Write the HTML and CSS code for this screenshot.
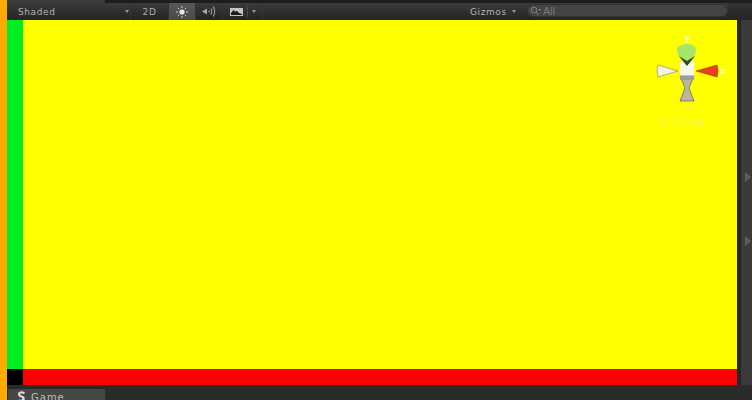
FILE: index.html
```html
<!DOCTYPE html>
<html lang="en">
<head>
  <meta charset="UTF-8" />
  <title>Scene</title>
  <link rel="stylesheet" href="styles.css">
</head>
<body>
  <!-- Left edge of the window -->
  <div class="edge"></div>

  <div class="editor">
    <div class="tab-top"><div class="tab-top-left"></div></div>

    <!-- Scene toolbar -->
    <div class="toolbar">
      <div class="tool tool-shaded"><span>Shaded</span><i class="caret"></i></div>
      <div class="tool tool-2d">2D</div>
      <div class="tool tool-light">
        <svg width="18" height="14" viewBox="0 0 18 14">
          <circle cx="9" cy="7" r="2.6" fill="#e8e8e8"/>
          <path d="M9 1V3M9 11V13M3 7H5M13 7H15M4.8 2.8L6.2 4.2M11.8 9.8L13.2 11.2M13.2 2.8L11.8 4.2M6.2 9.8L4.8 11.2" stroke="#cfcfcf" stroke-width="1"/>
        </svg>
      </div>
      <div class="tool tool-audio">
        <svg width="16" height="13" viewBox="0 0 16 13">
          <path d="M1 6.5L6 3.5V9.5Z" fill="#a8a8a8"/>
          <circle cx="8" cy="6.5" r="0.8" fill="#a8a8a8"/>
          <path d="M10 3.5Q11.5 6.5 10 9.5M12.5 1.5Q15 6.5 12.5 11.5" fill="none" stroke="#a8a8a8" stroke-width="1"/>
        </svg>
      </div>
      <div class="tool tool-image">
        <svg width="13" height="8" viewBox="0 0 13 8">
          <rect width="13" height="8" fill="#c4c4c4"/>
          <path d="M1 7V5L3.5 2L5 3.5L7 3L9 5L12 6V7Z" fill="#1c1c1c"/>
        </svg>
        <i class="sep"></i><i class="caret"></i>
      </div>
      <div class="spacer"></div>
      <div class="tool tool-gizmos"><span>Gizmos</span><i class="caret"></i></div>
      <div class="search">
        <svg width="12" height="10" viewBox="0 0 12 10">
          <circle cx="4" cy="4" r="2.8" fill="none" stroke="#808080" stroke-width="1"/>
          <path d="M6 6L8.5 9" stroke="#808080" stroke-width="1"/>
          <path d="M8 3H11.5L9.7 5Z" fill="#808080"/>
        </svg>
        <span>All</span>
      </div>
      <div class="toolbar-end"></div>
    </div>

    <div class="middle">
      <!-- Viewport -->
      <div class="view">
        <div class="view-top">
          <div class="bar-green"></div>
          <div class="scene">
            <div class="gizmo">
              <svg width="72" height="72" viewBox="0 0 72 72">
                <path d="M30 1L32 5L34 1M32 5V8" fill="none" stroke="#fffbc8" stroke-width="1.6"/>
                <path d="M22 15Q22 9 32 9Q41 9 41 15Q41 22 32 29Q22 22 22 15Z" fill="#a6e46a"/>
                <rect x="25" y="27" width="14" height="14" fill="#f6f6ea"/>
                <path d="M24 21L32 26L40 21L32 31Z" fill="#2c4a1c"/>
                <path d="M3 30L23 36L3 42Q1 36 3 30Z" fill="#f3f3e4" stroke="#85825e" stroke-width="0.6"/>
                <path d="M62 30L41 36L62 42Q64 36 62 30Z" fill="#e8401c" stroke="#a53a10" stroke-width="0.6"/>
                <path d="M65 34L69 39M69 34L65 39" stroke="#fffbc8" stroke-width="1.4"/>
                <path d="M25 41H39L34 53L39 66H25L30 53Z" fill="#b9b7a4" stroke="#706e58" stroke-width="0.8"/>
                <rect x="25" y="41" width="14" height="4" fill="#9d9d98"/>
              </svg>
              <div class="persp"><span>&lt;</span> Persp</div>
            </div>
          </div>
        </div>
        <div class="view-bottom">
          <div class="corner"></div>
          <div class="bar-red"></div>
        </div>
      </div>
      <!-- Dark strip to the right -->
      <div class="side">
        <i class="arrow"></i>
        <i class="arrow"></i>
      </div>
    </div>

    <!-- Bottom tabs -->
    <div class="bottom">
      <div class="tab-game">
        <svg width="9" height="11" viewBox="0 0 9 11">
          <path d="M7.5 2Q2.5 0.5 2 3Q2 5 4.5 5.5Q7 6 6.5 8.5Q5 10.5 1.5 9.5" fill="none" stroke="#dcdcdc" stroke-width="2.2"/>
        </svg>
        <span>Game</span>
      </div>
    </div>
  </div>
</body>
</html>
```

FILE: styles.css
```css
* {
  margin: 0;
  padding: 0;
  box-sizing: border-box;
}

html, body {
  width: 752px;
  height: 400px;
  overflow: hidden;
}

body {
  display: flex;
  font-family: 'DejaVu Sans', sans-serif;
  color: #b4b4b4;
  background: #2e2e2e;
}

.edge {
  width: 7px;
  background: #ffaa00;
}

.editor {
  flex: 1;
  display: flex;
  flex-direction: column;
  min-width: 0;
}

.tab-top {
  height: 3px;
  background: #1d1d1d;
}

.tab-top-left {
  width: 98px;
  height: 3px;
  background: #3c3c3c;
}

.toolbar {
  height: 17px;
  display: flex;
  align-items: stretch;
  background: linear-gradient(#3a3a3a, #242424);
  font-size: 9px;
  letter-spacing: 0.6px;
}

.tool {
  display: flex;
  align-items: center;
  border-right: 1px solid #333;
}

.tool-shaded {
  width: 124px;
  padding: 0 1px 0 11px;
  justify-content: space-between;
}

.tool-2d {
  width: 38px;
  justify-content: center;
  color: #aaa;
}

.tool-light {
  width: 27px;
  justify-content: center;
  background: linear-gradient(#585858, #484848);
}

.tool-audio {
  width: 27px;
  justify-content: center;
}

.tool-image {
  width: 40px;
  padding-left: 7px;
  gap: 4px;
}

.sep {
  width: 1px;
  height: 11px;
  background: #4a4a4a;
}

.caret {
  width: 0;
  height: 0;
  border-left: 2px solid transparent;
  border-right: 2px solid transparent;
  border-top: 3px solid #999;
}

.spacer {
  flex: 1;
}

.tool-gizmos {
  width: 62px;
  padding-left: 5px;
  gap: 5px;
  border-right: 0;
}

.search {
  width: 201px;
  height: 13px;
  margin-top: 1px;
  padding-left: 2px;
  display: flex;
  align-items: center;
  gap: 1px;
  background: #444;
  border: 1px solid #333;
  border-radius: 7px;
  font-family: 'Liberation Sans', sans-serif;
  font-size: 11px;
  letter-spacing: 0;
  color: #777;
}

.toolbar-end {
  width: 24px;
  background: linear-gradient(#333, #242424);
}

.middle {
  flex: 1;
  display: flex;
  min-height: 0;
}

.view {
  width: 730px;
  display: flex;
  flex-direction: column;
}

.view-top {
  flex: 1;
  display: flex;
  min-height: 0;
}

.bar-green {
  width: 16px;
  background: #00ee22;
}

.scene {
  flex: 1;
  position: relative;
  background: #ffff00;
}

.gizmo {
  position: absolute;
  top: 15px;
  right: 10px;
  width: 72px;
}

.gizmo svg {
  display: block;
}

.persp {
  margin-top: 9px;
  padding-left: 5px;
  font-size: 10px;
  letter-spacing: 1px;
  color: #f4f060;
}

.view-bottom {
  height: 16px;
  display: flex;
}

.corner {
  width: 16px;
  background: #000;
}

.bar-red {
  flex: 1;
  background: #ff0000;
}

.side {
  flex: 1;
  display: flex;
  flex-direction: column;
  align-items: flex-end;
  gap: 54px;
  padding-top: 152px;
  padding-right: 1px;
  background: #3a3a3a;
  border-left: 4px solid #262626;
}

.arrow {
  width: 0;
  height: 0;
  border-top: 5px solid transparent;
  border-bottom: 5px solid transparent;
  border-left: 6px solid #5e5e5e;
}

.bottom {
  height: 15px;
  padding: 4px 0 0 1px;
  background: #2a2a2a;
}

.tab-game {
  width: 97px;
  height: 11px;
  display: flex;
  align-items: flex-start;
  gap: 5px;
  padding: 2px 0 0 9px;
  background: #464646;
  border-radius: 2px 2px 0 0;
  font-size: 10px;
  letter-spacing: 1px;
  line-height: 14px;
  color: #bbb;
}
```
